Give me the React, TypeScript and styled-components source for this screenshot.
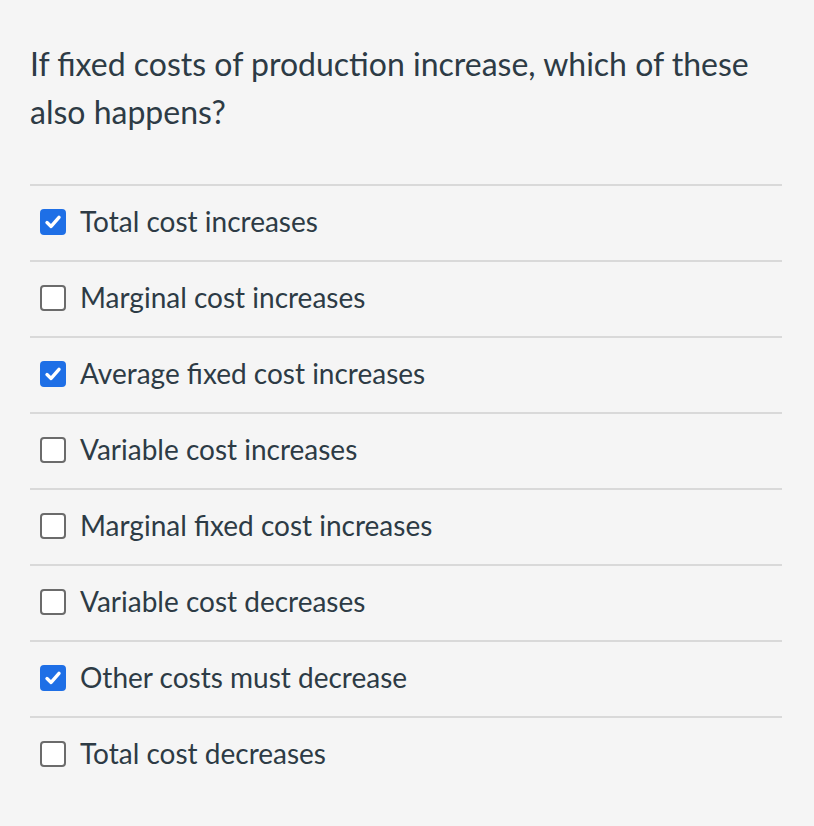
import React, { useState } from "react";
import styled, { createGlobalStyle } from "styled-components";

const GlobalStyle = createGlobalStyle`
  html, body {
    margin: 0;
    padding: 0;
    background: #f5f5f5;
  }
  body {
    font-family: Lato, "Noto Sans", sans-serif;
    color: #2d3b45;
  }
`;

const options = [
  { label: "Total cost increases", checked: true },
  { label: "Marginal cost increases", checked: false },
  { label: "Average fixed cost increases", checked: true },
  { label: "Variable cost increases", checked: false },
  { label: "Marginal fixed cost increases", checked: false },
  { label: "Variable cost decreases", checked: false },
  { label: "Other costs must decrease", checked: true },
  { label: "Total cost decreases", checked: false },
];

function App() {
  const [answers, setAnswers] = useState(options.map((o) => o.checked));

  const toggle = (i: number) => {
    setAnswers(answers.map((a, j) => (j === i ? !a : a)));
  };

  return (
    <Wrapper>
      <GlobalStyle />
      <Question>
        If fixed costs of production increase, which of these also happens?
      </Question>
      <AnswerList>
        {options.map((o, i) => (
          <Answer key={o.label} onClick={() => toggle(i)}>
            <Box checked={answers[i]}>
              {answers[i] && (
                <svg width="18" height="18" viewBox="0 0 18 18">
                  <path
                    d="M3 9.6 L7.1 13.4 L15 4.4"
                    fill="none"
                    stroke="#fff"
                    strokeWidth="3.4"
                    strokeLinecap="round"
                    strokeLinejoin="round"
                  />
                </svg>
              )}
            </Box>
            <Label>{o.label}</Label>
          </Answer>
        ))}
      </AnswerList>
    </Wrapper>
  );
}

const Wrapper = styled.div`
  padding: 40px 32px 40px 30px;
`;

const Question = styled.p`
  margin: 0 0 48px 0;
  font-size: 32px;
  line-height: 48px;
  font-weight: 400;
  max-width: 752px;
`;

const AnswerList = styled.div`
  display: flex;
  flex-direction: column;
`;

const Answer = styled.div`
  box-sizing: border-box;
  display: flex;
  align-items: center;
  gap: 14px;
  height: 76px;
  padding: 0 0 5px 10px;
  border-top: 2px solid #d9d9d9;
  cursor: pointer;
`;

const Box = styled.span<{ checked: boolean }>`
  box-sizing: border-box;
  flex-shrink: 0;
  width: 26px;
  height: 26px;
  margin-top: 2px;
  border-radius: 4px;
  display: flex;
  align-items: center;
  justify-content: center;
  background: ${(p) => (p.checked ? "#1e6fe6" : "#ffffff")};
  border: 2px solid ${(p) => (p.checked ? "#1e6fe6" : "#6b6b6b")};
`;

const Label = styled.span`
  font-size: 28px;
  line-height: 34px;
`;

export default App;
